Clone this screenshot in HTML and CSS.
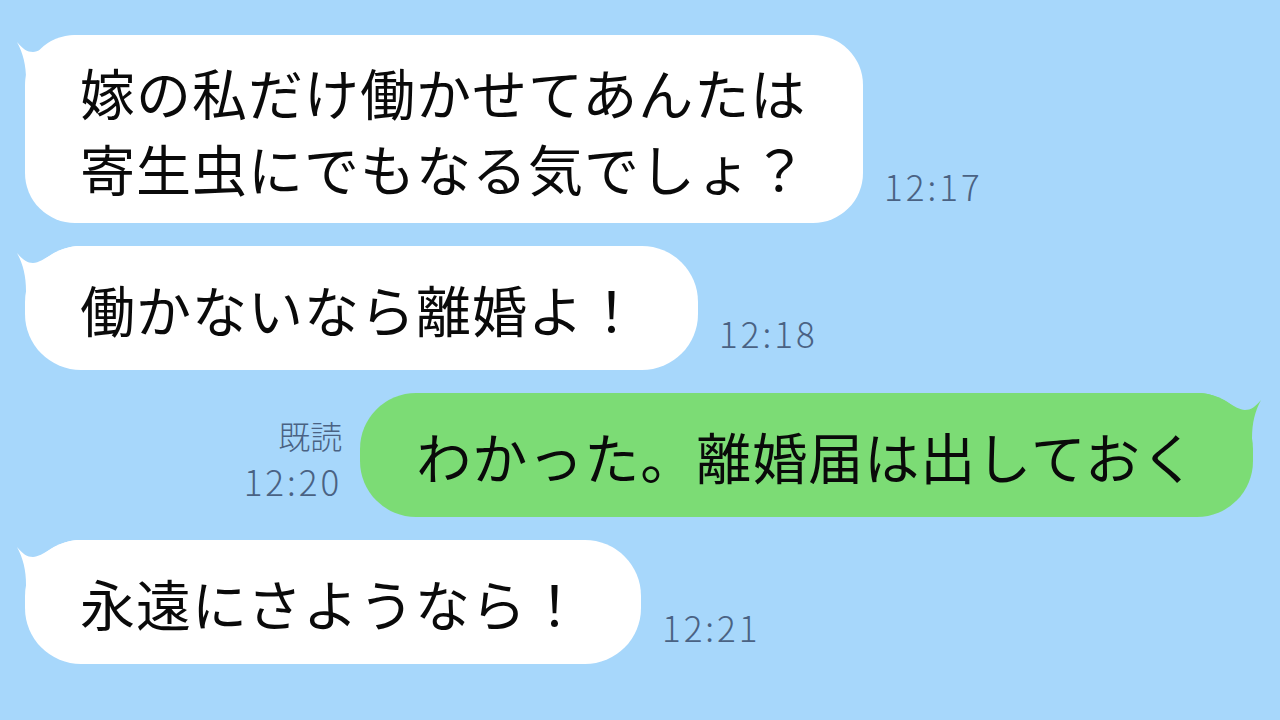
FILE: index.html
```html
<!DOCTYPE html>
<html lang="ja">
<head>
    <meta charset="UTF-8">
    <meta name="viewport" content="width=device-width, initial-scale=1.0">
    <title>トーク</title>
    <link rel="stylesheet" href="styles.css">
</head>
<body>

<div class="chat">
    <div class="row">
        <div class="bubble multi">
            <svg class="tail" width="70" height="60" viewBox="0 0 70 60"><path d="M2 7 C8 14 12 17 18 17 C28 17 40 2 62 0 L70 0 L70 60 L11 60 L11 45 C11 30 8 18 2 7 Z"/></svg>
            <span>嫁の私だけ働かせてあんたは<br>寄生虫にでもなる気でしょ？</span>
        </div>
        <div class="time">12:17</div>
    </div>

    <div class="row">
        <div class="bubble">
            <svg class="tail" width="70" height="60" viewBox="0 0 70 60"><path d="M2 7 C8 14 12 17 18 17 C28 17 40 2 62 0 L70 0 L70 60 L11 60 L11 45 C11 30 8 18 2 7 Z"/></svg>
            <span>働かないなら離婚よ！</span>
        </div>
        <div class="time">12:18</div>
    </div>

    <div class="row me">
        <div class="meta">
            <div class="read">既読</div>
            <div class="time">12:20</div>
        </div>
        <div class="bubble green">
            <svg class="tail" width="70" height="60" viewBox="0 0 70 60"><path d="M2 7 C8 14 12 17 18 17 C28 17 40 2 62 0 L70 0 L70 60 L11 60 L11 45 C11 30 8 18 2 7 Z"/></svg>
            <span>わかった。離婚届は出しておく</span>
        </div>
    </div>

    <div class="row">
        <div class="bubble">
            <svg class="tail" width="70" height="60" viewBox="0 0 70 60"><path d="M2 7 C8 14 12 17 18 17 C28 17 40 2 62 0 L70 0 L70 60 L11 60 L11 45 C11 30 8 18 2 7 Z"/></svg>
            <span>永遠にさようなら！</span>
        </div>
        <div class="time">12:21</div>
    </div>
</div>

</body>
</html>
```

FILE: styles.css
```css
body {
    margin: 0;
    background-color: #a7d7fb;
    font-family: "Noto Sans CJK JP", "Noto Sans", sans-serif;
    overflow: hidden;
}
.chat {
    display: flex;
    flex-direction: column;
    gap: 23px;
    padding: 35px 27px 0 25px;
}
.row {
    display: flex;
    align-items: flex-end;
}
.row.me {
    justify-content: flex-end;
}
.bubble {
    position: relative;
    background-color: #fff;
    color: #0a0a0a;
    font-size: 55px;
    line-height: 76px;
    letter-spacing: 1px;
    padding: 24px 58px 24px 55px;
    border-radius: 56px;
    white-space: nowrap;
}
.bubble span {
    position: relative; /* keep text above the tail */
}
.bubble.multi {
    padding-top: 18px;
    padding-bottom: 18px;
    padding-right: 55px;
    border-radius: 50px;
}
.bubble.green {
    background-color: #7cdc75;
    padding: 24px 56px 24px 56px;
}
.tail {
    position: absolute;
    left: -10px;
    top: 0;
    fill: #fff;
}
.green .tail {
    left: auto;
    right: -10px;
    fill: #7cdc75;
    transform: scaleX(-1);
}
.time {
    font-size: 35px;
    line-height: 1.1;
    letter-spacing: 3px;
    color: #4a6283;
    font-weight: 300;
}
.row > .time {
    margin-left: 21px;
    margin-bottom: 18px;
}
.meta {
    display: flex;
    flex-direction: column;
    align-items: flex-end;
    gap: 8px;
    margin-right: 18px;
    margin-bottom: 17px;
}
.read {
    font-size: 32px;
    line-height: 1.1;
    color: #4a6283;
    font-weight: 300;
}
```
